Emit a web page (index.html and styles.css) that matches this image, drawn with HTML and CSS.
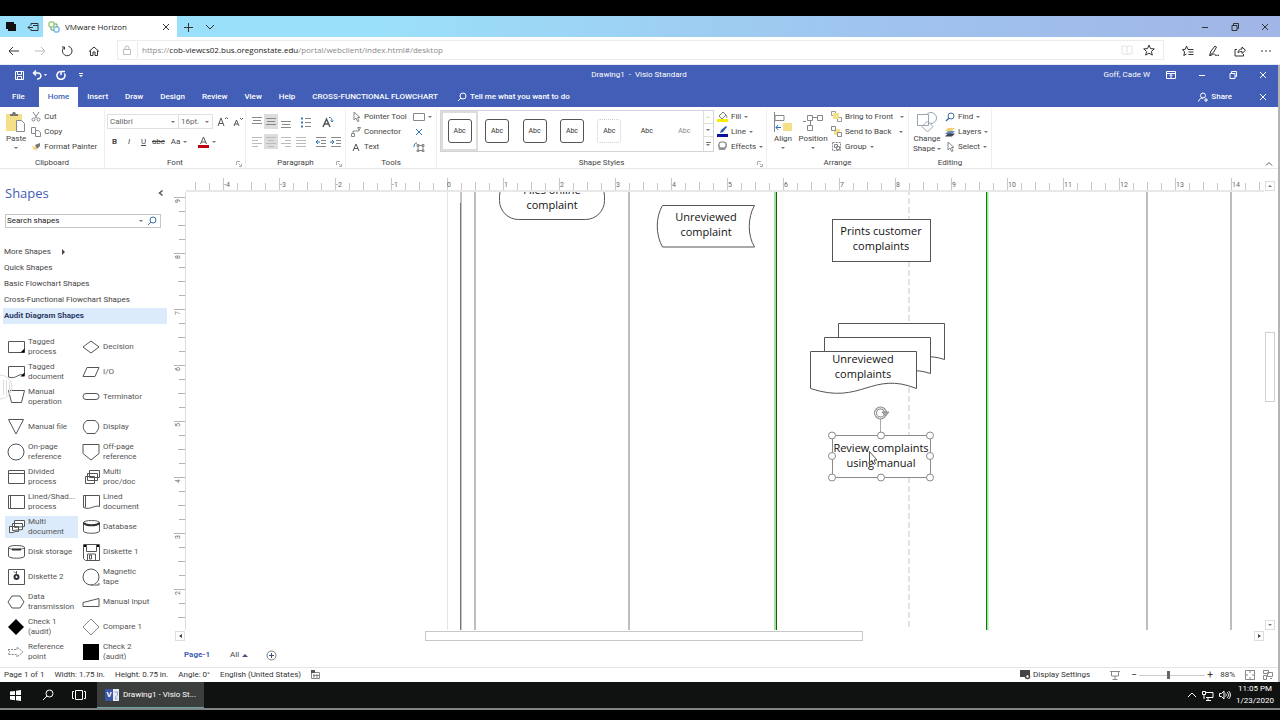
FILE: index.html
```html
<!DOCTYPE html>
<html lang="en">
<head>
<meta charset="utf-8">
<title>VMware Horizon</title>
<link rel="stylesheet" href="styles.css">
</head>
<body>
<div class="screen">
<header class="browser">
  <div class="tabbar">
    <button class="ib w26" aria-label="Tabs set aside"><svg width="12" height="12"><path d="M1 1h8v2H3v5H1z" fill="#111"/><rect x="3" y="3" width="8" height="7" fill="#111"/></svg></button>
    <button class="ib w17" aria-label="Set tabs aside"><svg width="12" height="12" class="ln"><path d="M4 2.500h7v7H4M4 2.500v2M4 8v1.500M6 4.500h5M1 6.500h5M3 4.500l-2 2 2 2"/></svg></button>
    <div class="tab">
      <svg width="12" height="12" fill="none"><rect x="1" y="1" width="5" height="5" rx="1" stroke="#6db33f"/><rect x="6" y="6" width="5" height="5" rx="1" stroke="#3a9bdc"/><path d="M3 6v3h3M6 3h3v3" stroke="#5aa66a"/></svg>
      <span>VMware Horizon</span>
      <button class="ib push" aria-label="Close tab"><svg width="10" height="10" class="ln"><path d="M2 2l6 6M8 2l-6 6"/></svg></button>
    </div>
    <button class="ib w22" aria-label="New tab"><svg width="10" height="10" class="ln"><path d="M5.500 1v9M1 5.500h9"/></svg></button>
    <button class="ib w21" aria-label="Tab menu"><svg width="10" height="10" class="ln"><path d="M1 3l4 4 4-4"/></svg></button>
    <span class="push"></span>
    <button class="ib w30" aria-label="Minimize"><svg width="10" height="10" class="ln"><path d="M2 5.500h6"/></svg></button>
    <button class="ib w30" aria-label="Restore"><svg width="10" height="10" class="ln"><path d="M2 3.500h5v5H2zM3.500 3.500v-2h5v5H7"/></svg></button>
    <button class="ib w30" aria-label="Close"><svg width="10" height="10" class="ln"><path d="M2 2l6 6M8 2l-6 6"/></svg></button>
  </div>
  <div class="address">
    <button class="ib w27" aria-label="Back"><svg width="12" height="12" class="ln"><path d="M11 6H1M5 2L1 6l4 4"/></svg></button>
    <button class="ib w26 dim" aria-label="Forward"><svg width="12" height="12" class="ln"><path d="M1 6h10M7 2l4 4-4 4"/></svg></button>
    <button class="ib w27" aria-label="Refresh"><svg width="12" height="12" class="ln"><path d="M7.500 1.300A4.800 4.800 0 1 1 3 2.400M1 2h2.500v2.500"/></svg></button>
    <button class="ib w27" aria-label="Home"><svg width="12" height="12" class="ln"><path d="M1 6.500L6 2l5 4.500M2.500 5.500v5h2.500V7h2v3.500h2.500v-5"/></svg></button>
    <div class="urlbox">
      <svg width="10" height="12" class="ln pale"><path d="M1.500 5.500h7v5h-7zM3 5.500V4a2 2 0 0 1 4 0v1.500"/></svg>
      <p class="url">https://<b>cob-viewcs02.bus.oregonstate.edu</b>/portal/webclient/index.html#/desktop</p>
      <button class="ib w22 faint push" aria-label="Reading view"><svg width="12" height="12" class="ln"><path d="M1 2h4l1 1 1-1h4v8H7l-1 1-1-1H1zM6 3v7"/></svg></button>
      <button class="ib w22" aria-label="Add to favorites"><svg width="12" height="12" class="ln"><path d="M6 1l1.500 3.600 3.800.3-2.900 2.500.9 3.700L6 9.100l-3.300 2 .9-3.700L.7 4.900l3.800-.3z"/></svg></button>
    </div>
    <div class="urltools">
      <button class="ib w26" aria-label="Favorites"><svg width="12" height="12" class="ln"><path d="M6 4.500L4.500 1 3.300 4.300.5 4.500 2.600 7l-.8 3.500L4.500 9M6 4.500h5.500M6.500 7h5M6.500 9.500h5"/></svg></button>
      <button class="ib w26" aria-label="Notes"><svg width="12" height="12" class="ln"><path d="M1.500 10.500L3 6l4-5 1.500 1-3 5.500-4 3c3 0 4-2 5-1.500s0 1.500 1.500 1.500 1-1 3 0"/></svg></button>
      <button class="ib w26" aria-label="Share page"><svg width="12" height="12" class="ln"><path d="M3 4.500H1v6.500h8.500V9M4 8c0-3 2-4 4-4V2l3.500 3.300L8 8.500v-2c-2 0-3 .3-4 1.500z"/></svg></button>
      <button class="ib w26" aria-label="More"><svg width="12" height="12" fill="#222"><circle cx="2" cy="6" r=".8"/><circle cx="6" cy="6" r=".8"/><circle cx="10" cy="6" r=".8"/></svg></button>
    </div>
  </div>
</header>

<div class="visio">
<div class="titlebar">
  <div class="qat">
    <button class="ib w20" aria-label="Save"><svg width="10" height="10" class="wt"><path d="M1.500 1.500h8v8h-8zM3.500 1.500v3h4v-3M3.500 9.500v-3h4v3"/></svg></button>
    <button class="ib w22" aria-label="Undo"><svg width="16" height="10" class="wt"><path d="M4 .500L1.500 3 4 5.500M1.500 3H6c4 0 4 6-1 6" stroke-width="1.500"/><path d="M12 4h3l-1.500 2z" fill="#fff" stroke="none"/></svg></button>
    <button class="ib w20" aria-label="Redo"><svg width="10" height="10" class="wt"><path d="M4 1.500A4 4 0 1 0 8.500 3.500M5 5V1.500h4" stroke-width="1.500"/></svg></button>
    <button class="ib w20" aria-label="Customize"><svg width="8" height="8" class="wt"><path d="M2 2.500h4"/><path d="M2 4h4l-2 2z" fill="#fff" stroke="none"/></svg></button>
  </div>
  <h1>Drawing1&nbsp; -&nbsp; Visio Standard</h1>
  <div class="winctl">
    <span class="user">Goff, Cade W</span>
    <button class="ib w31" aria-label="Ribbon options"><svg width="10" height="10" class="wt"><path d="M.500 1.500h9v7h-9zM.500 3.500h9M5 8V4.500M3.500 6L5 4.500 6.500 6"/></svg></button>
    <button class="ib w31" aria-label="Minimize window"><svg width="10" height="10" class="wt"><path d="M2 5.500h6"/></svg></button>
    <button class="ib w31" aria-label="Restore window"><svg width="10" height="10" class="wt"><path d="M2 3.500h5v5H2zM3.500 3.500v-2h5v5H7"/></svg></button>
    <button class="ib w30" aria-label="Close window"><svg width="10" height="10" class="wt"><path d="M2 2l6 6M8 2l-6 6"/></svg></button>
  </div>
</div>
<nav class="menubar">
  <button class="menu file">File</button><button class="menu on">Home</button><button class="menu">Insert</button><button class="menu">Draw</button><button class="menu">Design</button><button class="menu">Review</button><button class="menu">View</button><button class="menu">Help</button><button class="menu">CROSS-FUNCTIONAL FLOWCHART</button>
  <button class="menu tell"><svg width="10" height="10" class="wt"><circle cx="6" cy="4" r="3"/><path d="M4 6L1 9"/></svg>Tell me what you want to do</button>
  <button class="menu share push"><svg width="10" height="10" class="wt"><circle cx="5" cy="3.500" r="2.500"/><path d="M.500 9.500C1 7 3 6 5 6M8 6v4M6 8h4"/></svg>Share</button>
  <button class="ib w30" aria-label="Close drawing"><svg width="10" height="10" class="wt"><path d="M2 2l6 6M8 2l-6 6"/></svg></button>
</nav>

<section class="ribbon" aria-label="Home ribbon">
  <div class="group">
    <div class="body">
      <button class="big paste"><svg width="20" height="20"><rect y="2" width="16" height="17" fill="#f5e08a"/><path d="M4 4V2h2l1-2h2l1 2h2v2z" fill="#777"/><path d="M10.500 8.500h5l3 3v8h-8z" fill="#fff" stroke="#888"/></svg>Paste<i class="car"></i></button>
      <div class="rows">
        <button class="cmd"><svg width="10" height="10" class="gy"><path d="M2 0l4 6M8 0L4 6"/><circle cx="2.500" cy="7.500" r="1.500"/><circle cx="7.500" cy="7.500" r="1.500"/></svg>Cut</button>
        <button class="cmd"><svg width="10" height="10" class="gy"><path d="M.500.500h4v6h-4zM4.500 3.500h3l2 2v4h-5z" fill="#fff"/></svg>Copy</button>
        <button class="cmd"><svg width="10" height="10"><path d="M1 4l4 1 1 4-4-2z" fill="#edd680"/><path d="M4 3l5-2v3L6 7z" fill="#777"/></svg>Format Painter</button>
      </div>
    </div>
    <h2>Clipboard</h2>
  </div>
  <div class="group">
    <div class="body two">
      <div class="line r1">
        <span class="combo name"><select aria-label="Font"><option>Calibri</option></select><i class="car"></i></span><span class="combo size"><select aria-label="Font size"><option>16pt.</option></select><i class="car"></i></span>
        <button class="ib w20" aria-label="Grow font"><svg width="12" height="12" class="gy dk"><path d="M1 10l3-8 3 8M2 7.500h4M8 3l1.500-1.500L11 3"/></svg></button>
        <button class="ib w11" aria-label="Shrink font"><svg width="11" height="12" class="gy dk"><path d="M1 10l2.500-6L6 10M2 8h3M7 2l1.500 1.500L10 2"/></svg></button>
      </div>
      <div class="line r2 fmt">
        <button class="ib w15"><b>B</b></button><button class="ib w14"><em>I</em></button><button class="ib w15"><u>U</u></button><button class="ib w15"><s>abc</s></button><button class="ib w22 drop">Aa<i class="car"></i></button>
        <button class="ib w30 drop" aria-label="Font color"><svg width="11" height="12"><path d="M2.500 8l3-7 3 7M3.500 6h4" fill="none" stroke="#555"/><rect y="9" width="11" height="3" fill="#c00010"/></svg><i class="car"></i></button>
      </div>
    </div>
    <h2>Font</h2><svg class="launch" width="6" height="6"><path d="M.500 4V.500H4M2.500 2.500l2 2M5.500 3v2.500H3"/></svg>
  </div>
  <div class="group">
    <div class="body two">
      <div class="line r1 par">
        <button class="ib w15" aria-label="Align top"><svg width="10" height="12" class="gy"><path d="M0 1.500h10M1 4.500h8M0 7.500h10" /></svg></button><button class="ib w15 sel" aria-label="Align middle"><svg width="10" height="12" class="gy"><path d="M0 2.500h10M1 5.500h8M0 8.500h10"/></svg></button><button class="ib w15" aria-label="Align bottom"><svg width="10" height="12" class="gy"><path d="M0 5.500h10M1 8.500h8M0 11.500h10"/></svg></button>
        <button class="ib w26" aria-label="Bullets"><svg width="10" height="12" class="gy"><path d="M4 2.500h6M4 6.500h6M4 10.500h6"/><path d="M0 2.500h2M0 6.500h2M0 10.500h2" stroke="#3d7ab8" stroke-width="2"/></svg></button>
        <button class="ib w17" aria-label="Rotate text"><svg width="12" height="12" class="gy dk"><path d="M1 11l3.500-8L8 11M2.500 8h4" stroke-width="1.500"/><path d="M7 1.500c3 0 3 2 3 4M8.500 4.500L10 6l1.500-1.500" stroke="#3d7ab8"/></svg></button>
      </div>
      <div class="line r2 par">
        <button class="ib w15" aria-label="Align left"><svg width="10" height="12" class="gy lt"><path d="M0 1.500h10M0 4.500h6M0 7.500h10M0 10.500h6"/></svg></button><button class="ib w15 sel" aria-label="Center"><svg width="10" height="12" class="gy lt"><path d="M0 1.500h10M2 4.500h6M0 7.500h10M2 10.500h6"/></svg></button><button class="ib w15" aria-label="Align right"><svg width="10" height="12" class="gy lt"><path d="M0 1.500h10M4 4.500h6M0 7.500h10M4 10.500h6"/></svg></button><button class="ib w15" aria-label="Justify"><svg width="10" height="12" class="gy lt"><path d="M0 1.500h10M0 4.500h10M0 7.500h10M0 10.500h10"/></svg></button>
        <span class="gap5"></span>
        <button class="ib w15" aria-label="Decrease indent"><svg width="12" height="12" class="gy"><path d="M1 1.500h10M6 4.500h5M6 7.500h5M1 10.500h10"/><path d="M5 6H1M3 4L1 6l2 2" stroke="#2d6fb5"/></svg></button><button class="ib w15" aria-label="Increase indent"><svg width="12" height="12" class="gy"><path d="M1 1.500h10M6 4.500h5M6 7.500h5M1 10.500h10"/><path d="M0 6h4M2 4l2 2-2 2" stroke="#2d6fb5"/></svg></button>
      </div>
    </div>
    <h2>Paragraph</h2><svg class="launch" width="6" height="6"><path d="M.500 4V.500H4M2.500 2.500l2 2M5.500 3v2.500H3"/></svg>
  </div>
  <div class="group">
    <div class="body tools">
      <div class="rows">
        <button class="cmd"><svg width="10" height="10" class="gy"><path d="M3 0v8l2-2 1.500 3.500L8 9 6.500 5.500H9z"/></svg>Pointer Tool</button>
        <button class="cmd"><svg width="10" height="10" class="gy"><path d="M.500 6.500h3v3h-3zM6.500.500h3l-1.500 3zM2 6.500V4h6"/></svg>Connector</button>
        <button class="cmd"><svg width="10" height="10" class="gy dk"><path d="M2 9l3-7 3 7M3 6.500h4"/></svg>Text</button>
      </div>
      <div class="rows">
        <button class="cmd" aria-label="Rectangle"><svg width="12" height="10" class="gy"><path d="M.500 1.500h11v7H.500z"/></svg><i class="car"></i></button>
        <button class="cmd" aria-label="Connection point"><svg width="12" height="10"><path d="M3 2l6 6M9 2L3 8" stroke="#2d6fb5"/></svg></button>
        <button class="cmd" aria-label="Text block"><svg width="12" height="10" class="gy"><path d="M5 3.500h5v5H5zM4 2.500h2v2H4zM9 2.500h2v2H9zM4 8h2v1.500H4zM9 8h2v1.500H9z"/><path d="M1 5c0-3 1-4 3-4" stroke="#2d6fb5"/></svg></button>
      </div>
    </div>
    <h2>Tools</h2>
  </div>
  <div class="group">
    <div class="body">
      <div class="gallery">
        <button class="style on"><span>Abc</span></button><button class="style"><span>Abc</span></button><button class="style"><span>Abc</span></button><button class="style"><span>Abc</span></button><button class="style dot"><span>Abc</span></button><button class="style none"><span>Abc</span></button><button class="style none soft"><span>Abc</span></button>
        <div class="gnav"><button aria-label="Previous styles"><i class="car up pl"></i></button><button aria-label="Next styles"><i class="car"></i></button><button class="more" aria-label="All styles"><i class="car"></i></button></div>
      </div>
      <div class="rows">
        <button class="cmd"><svg width="11" height="11"><path d="M2 5l4-4 3 3-4 4zM9 4c1 1 1 2 .5 3" fill="#fff" stroke="#777"/><rect y="8" width="11" height="3" fill="#f4f000"/></svg>Fill<i class="car"></i></button>
        <button class="cmd"><svg width="11" height="11"><path d="M3 7l1-3 5-4 1 1-4 5z" fill="#2d5fa5"/><rect y="8" width="11" height="3" fill="#0a12a0"/></svg>Line<i class="car"></i></button>
        <button class="cmd"><svg width="11" height="11"><path d="M1 4l2-3h6l1 4-2 4H2z" fill="#999"/><rect x="2" y="1" width="7" height="6" rx="2" fill="#fff" stroke="#777"/></svg>Effects<i class="car"></i></button>
      </div>
    </div>
    <h2>Shape Styles</h2><svg class="launch" width="6" height="6"><path d="M.500 4V.500H4M2.500 2.500l2 2M5.500 3v2.500H3"/></svg>
  </div>
  <div class="group">
    <div class="body">
      <button class="big align"><svg width="20" height="20" class="gy"><path d="M1.500 0v20M2 3.500h9v5H2z"/><rect x="10" y="11" width="9" height="8" fill="#f5e08a" stroke="none"/><path d="M8 15.500H3M5 13l-2 2.500L5 18" stroke="#2d6fb5"/></svg>Align<i class="car"></i></button>
      <button class="big position"><svg width="20" height="20" class="gy"><path d="M4.500 3.500h5v5h-5zM14.500 3.500h5v5h-5zM4.500 13.500h5v5h-5zM10 5.500h4M7.500 9v4M0 9.500h3"/></svg>Position<i class="car"></i></button>
      <div class="rows">
        <button class="cmd"><svg width="11" height="11"><path d="M.500.500h4v4h-4zM6.500 6.500h4v4h-4z" fill="#fff" stroke="#999"/><rect x="2" y="2" width="6" height="6" fill="#f5e08a"/></svg>Bring to Front<i class="car far"></i></button>
        <button class="cmd"><svg width="11" height="11"><rect x="3" y="3" width="6" height="6" fill="#f5e08a"/><path d="M.500.500h4v4h-4zM6.500 6.500h4v4h-4z" fill="#fff" stroke="#888"/></svg>Send to Back<i class="car far"></i></button>
        <button class="cmd"><svg width="11" height="11" class="gy"><path d="M1.500 1.500h8v8h-8z" stroke-dasharray="2 1"/><path d="M3.500 3.500h3v3h-3zM5.500 5.500h3v3h-3z"/></svg>Group<i class="car"></i></button>
      </div>
    </div>
    <h2>Arrange</h2>
  </div>
  <div class="group">
    <div class="body">
      <button class="big change"><svg width="20" height="20" class="gy blu"><circle cx="14" cy="6" r="5.500"/><path d="M.500 2.500h11v11H.500zM10.500 9l5.500 5.500-5.500 5.500L5 14.500z" fill="#fff"/></svg>Change<span>Shape<i class="car"></i></span></button>
      <div class="rows">
        <button class="cmd"><svg width="10" height="10"><circle cx="6" cy="4" r="3" fill="none" stroke="#3d6fa8"/><path d="M4 6L1 9" stroke="#3d6fa8" stroke-width="1.500"/></svg>Find<i class="car"></i></button>
        <button class="cmd"><svg width="10" height="10"><path d="M3 1h7L7 4H0z" fill="#edd070"/><path d="M3 4h7L7 7H0z" fill="#6a8fc0"/><path d="M3 6.500h7l-3 3H0z" fill="#3c4658"/></svg>Layers<i class="car"></i></button>
        <button class="cmd"><svg width="10" height="10" class="gy"><path d="M3 0v8l2-2 1.500 3.500L8 9 6.500 5.500H9z"/></svg>Select<i class="car"></i></button>
      </div>
    </div>
    <h2>Editing</h2>
  </div>
  <div class="group last"><button class="ib collapse" aria-label="Collapse ribbon"><svg width="8" height="8" class="gy dk"><path d="M1 5.500l3-3 3 3"/></svg></button></div>
</section>

<main class="work">
  <aside class="shapes">
    <div class="shead"><h2>Shapes</h2><button class="ib" aria-label="Collapse pane"><svg width="6" height="8" class="gy dk"><path d="M4.500 1.500L1.500 4l3 2.500" stroke-width="1.500"/></svg></button></div>
    <div class="search"><input type="text" value="Search shapes" aria-label="Search shapes"><i class="car"></i><button class="ib w17" aria-label="Search"><svg width="10" height="10"><circle cx="6" cy="4" r="3" fill="none" stroke="#3d6fa8"/><path d="M4 6L1 9" stroke="#3d6fa8"/></svg></button></div>
    <ul class="stencils">
      <li>More Shapes<i class="rt"></i></li><li>Quick Shapes</li><li>Basic Flowchart Shapes</li><li>Cross-Functional Flowchart Shapes</li><li class="on">Audit Diagram Shapes</li>
    </ul>
    <div class="stencil">
    <ul class="masters">
      <li><svg class="m"><path d="M1.500 3.500h16v11h-16z"/><path d="M17.500 10.500v4h-4z" class="k"/></svg><span>Tagged<br>process</span></li>
      <li><svg class="m"><path d="M9 3l8 6-8 6-8-6z"/></svg><span>Decision</span></li>
      <li><svg class="m"><path d="M1.500 3.500h16v9C12 9 9 17 1.500 14z"/><path d="M17.500 9.500v4h-4z" class="k"/></svg><span>Tagged<br>document</span></li>
      <li><svg class="m"><path d="M5 4.500h12l-4 9H1z"/></svg><span>I/O</span></li>
      <li><svg class="m"><path d="M1.500 2.500h16l-3 12h-10z"/></svg><span>Manual<br>operation</span></li>
      <li><svg class="m"><rect x="1" y="5.500" width="16" height="6" rx="3"/></svg><span>Terminator</span></li>
    </ul>
    <ul class="masters">
      <li><svg class="m"><path d="M1.500 1.500h15L9 16z"/></svg><span>Manual file</span></li>
      <li><svg class="m"><path d="M5 2.500h8c5 3 5 9 0 13H5c-5-4-5-10 0-13z"/></svg><span>Display</span></li>
      <li><svg class="m"><circle cx="9" cy="9" r="8"/></svg><span>On-page<br>reference</span></li>
      <li><svg class="m"><path d="M1 1.500h16v9L9 17l-8-6.500z"/></svg><span>Off-page<br>reference</span></li>
      <li><svg class="m"><path d="M1.500 2.500h16v13h-16zM1.500 5.500h16"/></svg><span>Divided<br>process</span></li>
      <li><svg class="m"><path d="M7.500 2.500h10v7h-10zM5.500 5.500h10v7h-10zM3.500 8.500h9v7h-9z"/></svg><span>Multi<br>proc/doc</span></li>
      <li><svg class="m"><path d="M1.500 2.500h16v13h-16zM3.500 2.500v13"/></svg><span>Lined/Shad...<br>process</span></li>
      <li><svg class="m"><path d="M1.500 2.500h16v11c-5-2-9 4-16 1zM3.500 2.500v12"/></svg><span>Lined<br>document</span></li>
      <li class="on"><svg class="m"><path d="M7.500 2.500h10v6l-10 1zM5.500 5.500h10v6l-10 1zM2.500 8.500h9v5c-4-1-5 2-9 1z"/></svg><span>Multi<br>document</span></li>
      <li><svg class="m"><path d="M1.500 4v9c0 3 16 3 16 0V4"/><ellipse cx="9.500" cy="4.500" rx="8" ry="2"/><path d="M1.500 5c3 3 13 3 16 0" class="thick"/></svg><span>Database</span></li>
      <li><svg class="m"><path d="M1.500 4v9c0 3 16 3 16 0V4"/><ellipse cx="9.500" cy="4.500" rx="8" ry="2"/><path d="M5 6.500h9" class="thick"/></svg><span>Disk storage</span></li>
      <li><svg class="m"><path d="M1.500 1.500h16v16h-14l-2-2zM4.500 1.500v7h10v-7M5.500 17v-6h8v6M7.500 12h2v4h-2z"/><path d="M2 2h2v2H2zM15 2h2v2h-2z" class="k"/></svg><span>Diskette 1</span></li>
      <li><svg class="m"><path d="M1.500 1.500h16v15h-16z"/><circle cx="9.500" cy="9" r="2" class="thick"/><path d="M9.500 3v5M7 3.500l2 2"/></svg><span>Diskette 2</span></li>
      <li><svg class="m"><circle cx="9" cy="9" r="8"/><path d="M9 17h8v-2"/></svg><span>Magnetic<br>tape</span></li>
      <li><svg class="m"><path d="M5 3h8l4 6-4 6H5L1 9z"/></svg><span>Data<br>transmission</span></li>
      <li><svg class="m"><path d="M1 9.500l16-4v8H1z"/></svg><span>Manual input</span></li>
      <li><svg class="m"><path d="M9 1l8 8-8 8-8-8z" class="k"/></svg><span>Check 1<br>(audit)</span></li>
      <li><svg class="m thin"><path d="M9 1l8 8-8 8-8-8z"/></svg><span>Compare 1</span></li>
      <li><svg class="m thin"><path d="M1 6.500h9V4l6 5-6 5v-2.500H1L3 9z" stroke-dasharray="2 1"/></svg><span>Reference<br>point</span></li>
      <li><svg class="m"><path d="M1 1h16v17H1z" class="k"/></svg><span>Check 2<br>(audit)</span></li>
    </ul>
    </div>
    <svg class="grip" width="14" height="38"><circle cx="0" cy="19" r="12"/><path d="M3.500 12v15M6.500 12v15M9.500 14v11"/></svg>
  </aside>
  <section class="drawing">
    <svg class="hruler">
      <defs>
        <pattern id="ht" x="37" width="56" height="14" patternUnits="userSpaceOnUse"><path d="M.500 0v14M14.500 5v9M28.500 4v10M42.500 5v9" stroke="#c8c8c8"/></pattern>
        <pattern id="vt" y="5" width="12" height="56" patternUnits="userSpaceOnUse"><path d="M0 .500h11M5 14.500h6M4 28.500h7M5 42.500h6" stroke="#b4b4b4"/></pattern>
      </defs>
      <rect width="100%" height="12" fill="url(#ht)"/>
      <g><text x="38" y="9">-4</text><text x="94" y="9">-3</text><text x="150" y="9">-2</text><text x="206" y="9">-1</text><text x="261" y="9">0</text><text x="318" y="9">1</text><text x="374" y="9">2</text><text x="430" y="9">3</text><text x="486" y="9">4</text><text x="542" y="9">5</text><text x="598" y="9">6</text><text x="654" y="9">7</text><text x="710" y="9">8</text><text x="766" y="9">9</text><text x="822" y="9">10</text><text x="878" y="9">11</text><text x="934" y="9">12</text><text x="990" y="9">13</text><text x="1046" y="9">14</text></g>
    </svg>
    <svg class="vruler">
      <rect width="11" height="100%" fill="url(#vt)"/>
      <g><text transform="translate(6 11) rotate(-90)">9</text><text transform="translate(6 67) rotate(-90)">8</text><text transform="translate(6 123) rotate(-90)">7</text><text transform="translate(6 179) rotate(-90)">6</text><text transform="translate(6 235) rotate(-90)">5</text><text transform="translate(6 291) rotate(-90)">4</text><text transform="translate(6 347) rotate(-90)">3</text><text transform="translate(6 403) rotate(-90)">2</text></g>
    </svg>
    <div class="canvas">
      <svg class="art">
        <g transform="translate(-186 -192)" fill="none">
          <path d="M447.500 180v1000" stroke="#e4e4e4"/>
          <path d="M475 180v1000M629 180v1000M1147 180v1000M1231 180v1000" stroke="#bebebe" stroke-width="2"/>
          <path d="M461 180v1000" stroke="#c4c4c4" stroke-width="2"/><path d="M460.500 203v1000" stroke="#777"/>
          <path d="M775 180v1000M987.500 180v1000" stroke="#9be69b" stroke-width="2"/><path d="M776.500 180v1000" stroke="#1c5a1c"/><path d="M986.500 180v1000" stroke="#127a12"/>
          <path d="M909 180v1000" stroke="#e2e2e2" stroke-width="2" stroke-dasharray="6 3"/>
          <g stroke="#555" fill="#fff">
            <rect x="499.500" y="177.500" width="105" height="42" rx="19"/>
            <path d="M662.500 205.500h92c-7 12-7 30 0 41.500h-92c-7-12-7-30 0-41.500z"/>
            <rect x="832.500" y="219.500" width="98" height="42"/>
            <path d="M838.500 323.500h106v36c-30-10-45 10-75 5h-31z"/>
            <path d="M824.500 337.500h106v36c-30-10-45 10-75 5h-31z"/>
            <path d="M810.500 351.500h106v37c-45-18-55 17-106 0z"/>
          </g>
          <g stroke="#8a8a8a" fill="#fff">
            <rect x="832.500" y="435.500" width="98" height="42"/><path d="M880.500 418v15" stroke="#aaa"/>
            <circle cx="832" cy="435.500" r="3.500"/><circle cx="881" cy="435.500" r="3.500"/><circle cx="930" cy="435.500" r="3.500"/><circle cx="832" cy="456" r="3.500"/><circle cx="930" cy="456" r="3.500"/><circle cx="832" cy="477.500" r="3.500"/><circle cx="881" cy="477.500" r="3.500"/><circle cx="930" cy="477.500" r="3.500"/>
            <circle cx="880.500" cy="413" r="5" stroke-width="3"/><circle cx="880.500" cy="413" r="5" stroke="#fff" fill="none"/><path d="M882 412h7l-3.500 4z" fill="#aaa"/>
          </g>
        </g>
      </svg>
      <p class="node n1">Files online<br>complaint</p>
      <p class="node n2">Unreviewed<br>complaint</p>
      <p class="node n3">Prints customer<br>complaints</p>
      <p class="node n4">Unreviewed<br>complaints</p>
      <p class="node n5">Review complaints<br>using manual</p>
      <svg class="cursor" width="9" height="14"><path d="M.500.500v11l2.500-2 2 4 1.500-1-1.500-3.500h3z" fill="#fff" stroke="#555"/></svg>
    </div>
    <div class="vscroll"><button aria-label="Scroll up"><i class="car up"></i></button><i class="a"></i><i class="b"></i><i class="c"></i><button aria-label="Scroll down"><i class="car"></i></button></div>
    <div class="hscroll"><button aria-label="Scroll left"><i class="lf"></i></button><i class="a"></i><i class="b"></i><i class="c"></i><button aria-label="Scroll right"><i class="rt"></i></button></div>
    <div class="pages"><button class="pg">Page-1</button><button class="all">All<i class="car up"></i></button><button class="ib" aria-label="Insert page"><svg width="11" height="11" fill="none" stroke="#3b4f80"><circle cx="5.500" cy="5.500" r="4.500" stroke="#777"/><path d="M5.500 3v5M3 5.500h5"/></svg></button></div>
  </section>
</main>

<footer class="status">
  <span>Page 1 of 1</span><span>Width: 1.75 in.</span><span>Height: 0.75 in.</span><span>Angle: 0°</span><span>English (United States)</span>
  <svg width="10" height="10" class="gy"><path d="M.500 2.500h8v6h-8zM2 5.500h6M3 4v5M6 4v5"/><rect width="4" height="3" fill="#555" stroke="none"/></svg>
  <button class="disp push"><svg width="11" height="10"><path d="M0 0h10v5H6v2H0z" fill="#444"/><circle cx="7.500" cy="6.500" r="2" fill="#fff" stroke="#444" stroke-width="1.500"/></svg>Display Settings</button>
  <svg class="pres gy" width="10" height="10"><path d="M0 1.500h10M1.500 2v4h7V2M5 6v3M2.500 9.500h5"/></svg>
  <span class="pm">−</span><input type="range" min="0" max="100" value="45" aria-label="Zoom"><span class="pm">+</span><span class="pct">88%</span>
  <svg class="fit gy" width="10" height="10"><path d="M.500.500h9v9h-9zM5 1v2M5 7v2M1 5h2M7 5h2"/></svg>
  <svg class="gy" width="10" height="10"><path d="M.500.500h5v3h-5zM4.500 2.500h5v4h-5zM.500 5.500h3v4h-3zM7 8.500h2"/></svg>
</footer>
</div>

<div class="taskbar">
  <button class="ib w31" aria-label="Start"><svg width="11" height="11" fill="#fff"><path d="M0 1.500L5 1v4H0zM6 .800L11 0v5H6zM0 6h5v4.200L0 9.500zM6 6h5v5l-5-.700z"/></svg></button>
  <button class="ib w33" aria-label="Search Windows"><svg width="12" height="12" class="wt"><circle cx="7.500" cy="4.500" r="3.500"/><path d="M5 7l-4 4"/></svg></button>
  <button class="ib w30" aria-label="Task view"><svg width="14" height="12" class="wt"><path d="M3.500 1.500h7v9h-7zM2 2.500H.500v7H2M12 2.500h1.500v7H12"/></svg></button>
  <button class="task"><span class="vis"><b>V</b><svg width="6" height="12" fill="none" stroke="#9aa5c8"><path d="M1.500 3h3v3l-2 2v2h2"/></svg></span>Drawing1 - Visio St...</button>
  <div class="tray">
    <svg width="10" height="8" class="wt"><path d="M1 6l4-4 4 4"/></svg>
    <svg width="12" height="11" class="wt"><path d="M3 2.500h8v5H4M6 8v2M4 10.500h5M.500 1.500h3v3h-3zM2 5v4"/></svg>
    <svg width="12" height="10" class="wt"><path d="M.500 3.500h2L5 1v8L2.500 6.500h-2zM6.500 3.500c1 1 1 2 0 3M8 2c2 2 2 4 0 6M9.500 1c2.500 2 2.500 6 0 8"/></svg>
    <time>11:05 PM<br>1/23/2020</time>
  </div>
</div>
</div>
</body>
</html>
```
FILE: styles.css
```css
* { box-sizing: border-box; margin: 0; padding: 0; }
body { background: #000; font: 8px/10px Roboto, "Liberation Sans", sans-serif; color: #444; }
button, input, select { font: inherit; color: inherit; background: none; border: 0; }
ul { list-style: none; }
svg { display: block; flex: none; }
h1, h2 { font: inherit; }
.screen { min-height: 100vh; padding: 16px 0 10px; display: flex; flex-direction: column; }
.push { margin-left: auto; }

.ib { display: flex; align-items: center; justify-content: center; flex: none; }
.w11 { width: 11px; } .w14 { width: 14px; } .w15 { width: 15px; } .w17 { width: 17px; }
.w20 { width: 20px; } .w21 { width: 21px; } .w22 { width: 22px; } .w26 { width: 26px; }
.w27 { width: 27px; } .w30 { width: 30px; } .w31 { width: 31px; } .w33 { width: 33px; }
.ln { fill: none; stroke: #333; }
.wt { fill: none; stroke: #fff; }
.gy { fill: none; stroke: #888; }
.gy.dk { stroke: #555; }
.gy.lt { stroke: #bbb; }
.gy.blu { stroke: #9aa3b5; }
.dim .ln, .ln.pale { stroke: #bbb; }
.faint .ln { stroke: #e4e4e4; }

.car { display: inline-block; flex: none; width: 0; height: 0; border: 2px solid transparent; border-top-color: #777; border-bottom: 0; }
.car.up { border-top: 0; border-bottom: 2px solid #777; }
.car.pl { border-bottom-color: #ddd; }
.rt, .lf { display: inline-block; border: 3px solid transparent; border-left-color: #444; border-right: 0; }
.lf { border-left: 0; border-right: 3px solid #444; }

/* browser */
.browser { font-family: "Open Sans", "Noto Sans", sans-serif; }
.tabbar { display: flex; height: 21px; background: linear-gradient(90deg, #9be0fa 30%, #9fc4ee 68%, #a1b5e6); }
.tabbar > .w26 { width: 22px; }
.tabbar > .w17 { width: 21px; }
.tab { width: 134px; display: flex; align-items: center; gap: 5px; padding: 0 6px 0 5px; background: #fff; color: #222; }
.address { display: flex; align-items: stretch; height: 28px; background: #fff; border-bottom: 1px solid #e6ebf5; }
.urlbox { flex: 1; display: flex; align-items: center; margin: 3px 0 4px 10px; border: 1px solid #ececec; padding: 0 3px 0 4px; }
.url { margin-left: 5px; padding-left: 4px; line-height: 16px; border-left: 1px solid #e8e8e8; color: #8a8a8a; }
.url b { font-weight: 400; color: #222; }
.urltools { display: flex; margin-left: 11px; padding-right: 1px; }

/* application frame */
.visio { flex: 1; display: flex; flex-direction: column; background: #fff; border-right: 2px solid #b4b4b4; }
.titlebar { display: grid; grid-template-columns: 1fr auto 1fr; align-items: stretch; height: 20px; background: #425eb6; color: #fff; line-height: 20px; }
.qat { display: flex; padding-left: 9px; }
.winctl { display: flex; justify-content: flex-end; }
.user { padding-right: 5px; }
.menubar { display: flex; align-items: stretch; gap: 1px; height: 22px; padding: 2px 0 0 4px; background: #425eb6; color: #fff; font-weight: 500; }
.menu { padding: 0 8px; display: flex; align-items: center; }
.menu.file { margin-right: 5px; }
.menu.on { background: #fff; color: #425eb6; padding: 0 9px; }
.menu.tell { gap: 3px; padding-left: 10px; }
.menu.share { gap: 3px; padding-right: 15px; }

/* ribbon */
.ribbon { display: grid; grid-template-columns: 105px 141px 100px 91px 330px 142px 83px 1fr; height: 62px; padding-top: 2px; border-bottom: 1px solid #e8e8e8; }
.group { position: relative; display: flex; flex-direction: column; border-right: 1px solid #efefef; }
.group.last { border: 0; }
.group h2 { text-align: center; line-height: 14px; }
.body { height: 47px; display: flex; }
.launch { position: absolute; right: 3px; bottom: 3px; fill: none; stroke: #aaa; }
.rows { display: grid; grid-template-rows: repeat(3, 15px); }
.cmd { display: flex; align-items: center; gap: 3px; white-space: nowrap; }
.cmd .far { margin-left: 4px; }
.big { display: flex; flex-direction: column; align-items: center; justify-content: flex-start; padding-top: 3px; }
.big svg { margin-bottom: 2px; }
.big > .car { margin-top: 3px; }
.big span { display: flex; align-items: center; gap: 2px; }
.paste { margin: 0 5px 0 6px; }
.body.two { flex-direction: column; padding-left: 2px; }
.line { display: flex; align-items: center; height: 19px; }
.r1 { margin-top: 2px; height: 21px; }
.combo { display: flex; align-items: center; height: 15px; padding-right: 3px; border: 1px solid #e0e0e0; }
.combo select { appearance: none; flex: 1; min-width: 0; padding-left: 2px; color: #666; }
.name { width: 72px; } .size { width: 34px; border-left: 0; }
.fmt .drop { gap: 3px; }
.drop { margin-left: 2px; }
.par { padding-left: 1px; }
.sel { background: #ddd; width: 14px; height: 15px; }
.gap5 { width: 5px; }
.tools { padding-left: 5px; gap: 6px; }
.gallery { display: flex; width: 274px; height: 42px; margin: 1px 3px 0 3px; border: 1px solid #d4d4d4; }
.style { flex: 1; display: flex; align-items: center; justify-content: center; color: #333; }
.style span { width: 24px; height: 24px; line-height: 22px; border: 1px solid #555; border-radius: 3px; font-size: 7px; }
.style.on { outline: 2px solid #dcdcdc; outline-offset: -2px; }
.style.dot span { border: 1px dotted #ccc; }
.style.none span { border-color: transparent; }
.style.soft { color: #888; }
.gnav { width: 10px; display: grid; border-left: 1px solid #ddd; }
.gnav button { display: flex; align-items: center; justify-content: center; }
.gnav button + button { border-top: 1px solid #ddd; }
.gnav .more { flex-direction: column; gap: 1px; }
.more::before { content: ""; width: 5px; height: 1px; background: #777; }
.align { margin-left: 5px; width: 22px; }
.position { margin: 0 3px 0 4px; width: 30px; }
.change { width: 30px; margin: 0 3px; }
.collapse { position: absolute; right: 5px; bottom: 2px; }

/* shapes pane */
.work { flex: 1; display: flex; min-height: 0; }
.shapes { position: relative; width: 174px; padding: 15px 0 0 3px; }
.shead { display: flex; align-items: center; justify-content: space-between; padding: 0 10px 0 2px; }
.shead h2 { font: 13px/18px "Open Sans", "Noto Sans", sans-serif; color: #425eb6; }
.search { display: flex; align-items: center; width: 156px; height: 14px; margin: 12px 0 16px 2px; border: 1px solid #c6c6c6; }
.search input { flex: 1; min-width: 0; padding-left: 1px; color: #222; }
.stencils li { height: 16px; line-height: 16px; padding-left: 1px; width: 164px; }
.stencils .rt { margin-left: 11px; vertical-align: -1px; }
.stencils .on { background: #dcebfb; font-weight: 700; color: #2b3c66; }
.stencil { height: 324px; margin-top: 12px; overflow: hidden; }
.masters { display: grid; grid-template-columns: 73px 73px; gap: 3px 2px; padding-left: 2px; margin-bottom: 8px; }
.masters li { display: flex; align-items: center; gap: 3px; height: 22px; padding-left: 2px; white-space: nowrap; color: #555; }
.masters .on { background: #dcebfb; }
.m { width: 18px; height: 18px; fill: #fff; stroke: #555; }
.m.thin { stroke: #888; }
.m .k { fill: #000; stroke: none; }
.m .thick { stroke: #333; stroke-width: 2px; }
.grip { position: absolute; left: 0; top: 199px; fill: none; stroke: #ddd; }

/* drawing window */
.drawing { flex: 1; display: grid; grid-template-columns: 12px 1fr 14px; grid-template-rows: 14px 1fr 13px 24px; padding-top: 9px; }
.hruler { grid-area: 1 / 2; width: 100%; height: 14px; border-bottom: 2px solid #e8e8e8; }
.vruler { grid-area: 2 / 1; width: 12px; height: 100%; border-right: 1px solid #ddd; }
.hruler text, .vruler text { font-size: 7px; fill: #666; }
.canvas { grid-area: 2 / 2; position: relative; overflow: hidden; background: #fff; }
.art { position: absolute; width: 100%; height: 100%; }
.node { position: absolute; width: 110px; text-align: center; font: 11px/15px "Open Sans", "Noto Sans", sans-serif; color: #111; }
.n1 { left: 311px; top: -10px; }
.n2 { left: 465px; top: 17px; }
.n3 { left: 640px; top: 31px; }
.n4 { left: 622px; top: 159px; }
.n5 { left: 640px; top: 248px; }
.cursor { position: absolute; left: 683px; top: 259px; }
.vscroll { grid-area: 1 / 3 / 3 / 4; display: flex; flex-direction: column; padding: 3px 2px 0 1px; }
.vscroll button, .hscroll button { display: flex; align-items: center; justify-content: center; flex: none; width: 10px; height: 10px; border: 1px solid #ddd; }
.vscroll .a { flex: 142; } .vscroll .b { flex: 68; width: 10px; border: 1px solid #d0d0d0; } .vscroll .c { flex: 219; }
.hscroll { grid-area: 3 / 1 / 4 / 3; display: flex; padding: 1px 0 2px 1px; }
.hscroll .a { flex: 241; } .hscroll .b { flex: 437; border: 1px solid #c8c8c8; } .hscroll .c { flex: 392; }
.hscroll .rt, .hscroll .lf { border-top-width: 2px; border-bottom-width: 2px; }
.pages { grid-area: 4 / 1 / 5 / 4; display: flex; align-items: center; gap: 18px; padding-left: 10px; }
.pg { font-weight: 700; color: #425eb6; }
.all { display: flex; align-items: center; gap: 3px; margin-left: 2px; }
.all .car.up { border-width: 3px; border-top: 0; border-bottom-color: #425083; }

/* status bar */
.status { display: flex; align-items: center; height: 15px; padding: 0 5px 0 4px; border-top: 1px solid #e4e4e4; color: #333; }
.status > span { margin-right: 10px; }
.disp { display: flex; align-items: center; gap: 2px; }
.pres { margin: 0 10px 0 20px; }
.status > .pm { margin: 0; font-size: 10px; width: 8px; text-align: center; }
.status input { appearance: none; width: 66px; height: 10px; margin: 0 1px; background: linear-gradient(#ccc, #ccc) 0 50% / 100% 1px no-repeat; }
.status input::-webkit-slider-thumb { appearance: none; width: 3px; height: 8px; background: #666; }
.status > .pct { margin: 0 10px 0 6px; }
.fit { margin-right: 8px; }

/* taskbar */
.taskbar { display: flex; height: 28px; background: #101211; border-bottom: 2px solid #7f8484; color: #fff; }
.task { display: flex; align-items: center; gap: 4px; width: 107px; margin-left: 3px; padding-left: 8px; background: #3b3e3d; border-bottom: 1px solid #6fa3a8; }
.vis { display: flex; align-items: center; width: 14px; height: 12px; background: #e8ebf5; color: #fff; }
.vis b { width: 8px; line-height: 12px; background: #3955a3; }
.tray { display: flex; align-items: center; gap: 5px; margin-left: auto; padding-right: 6px; }
.tray time { text-align: center; line-height: 12px; }
```
